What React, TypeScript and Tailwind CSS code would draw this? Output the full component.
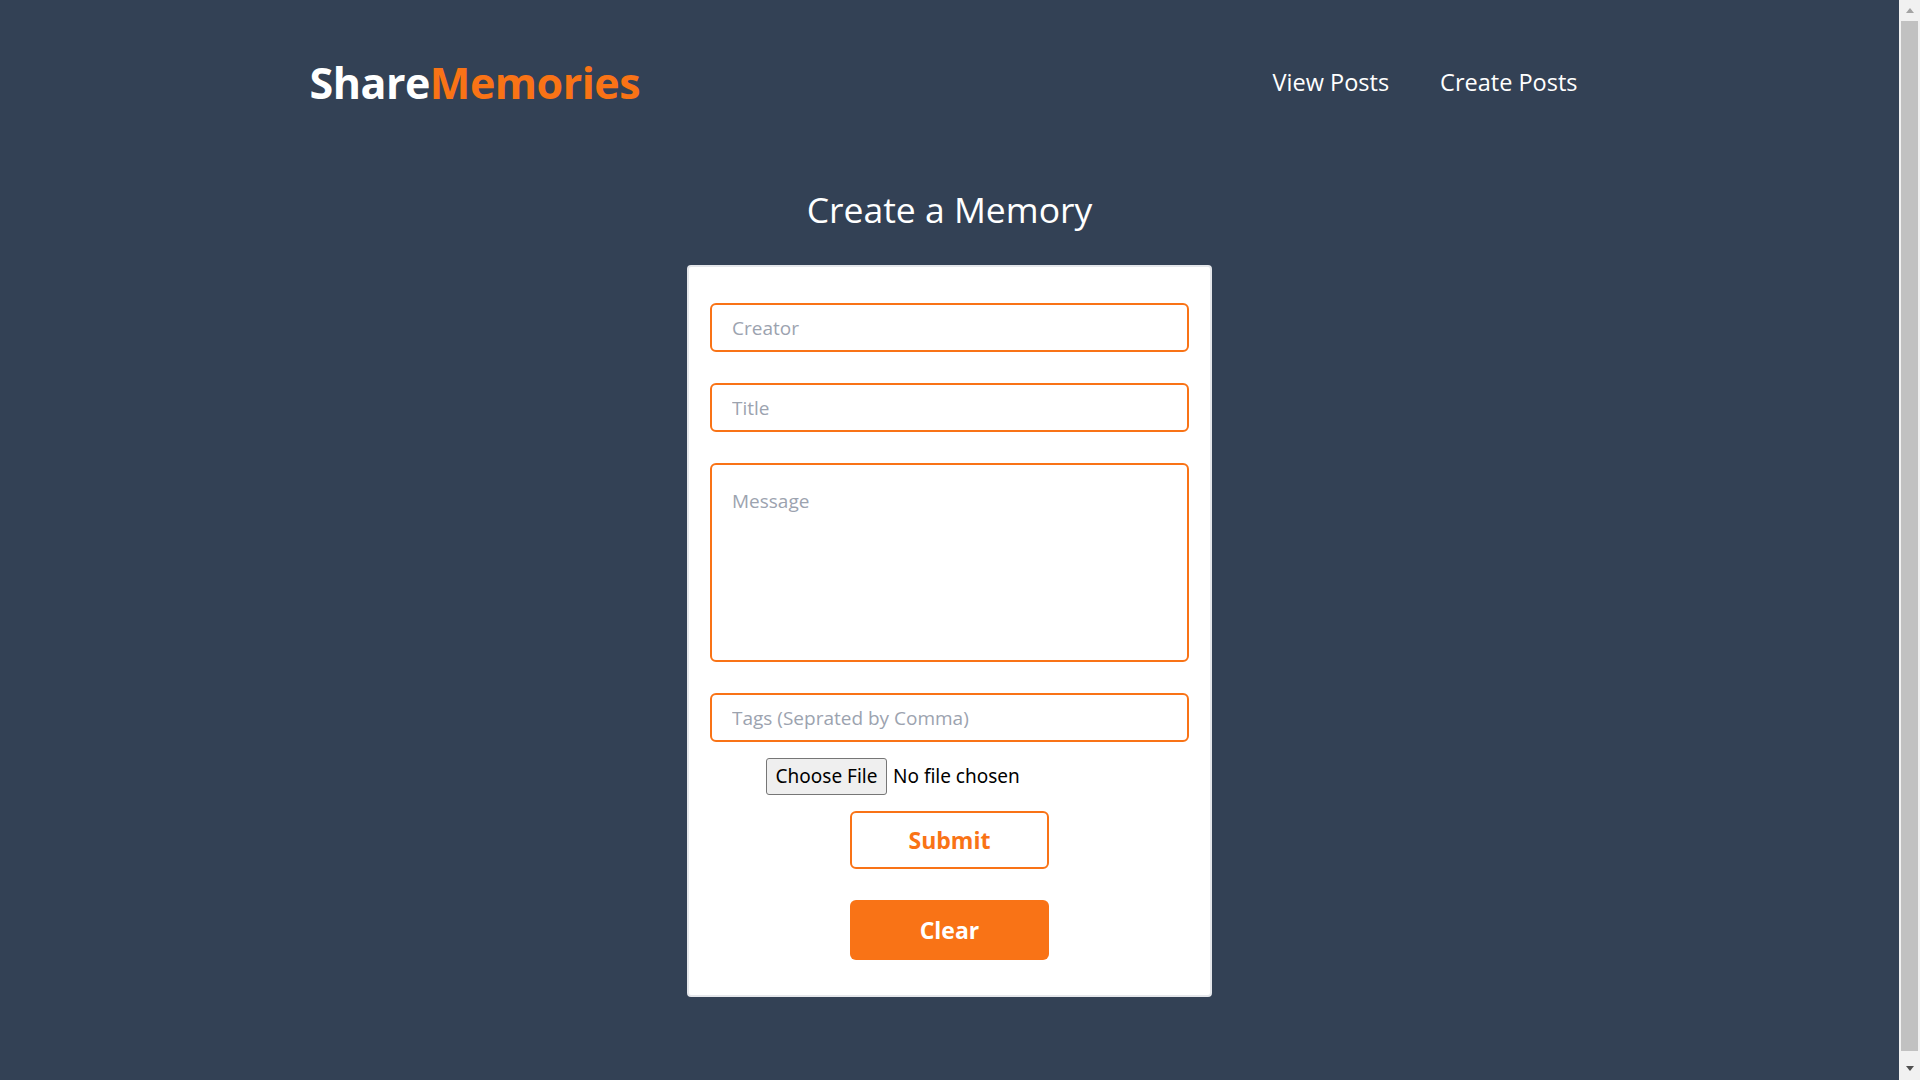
import { useState } from 'react';

const fieldClass =
  'w-full h-[49px] rounded-md border-2 border-[#f97316] bg-white px-5 text-[19px] text-gray-800 placeholder:text-[#9ca3af] outline-none';

function Scrollbar() {
  return (
    <aside className="flex h-full w-[21px] shrink-0 flex-col bg-[#f1f1f1]">
      <div className="flex h-[21px] items-center justify-center">
        <div className="h-0 w-0 border-x-[4px] border-b-[5px] border-x-transparent border-b-[#a3a3a3]" />
      </div>
      <div className="mx-[2px] h-[1030px] bg-[#c1c1c1]" />
      <div className="flex flex-1 items-center justify-center pt-[6px]">
        <div className="h-0 w-0 border-x-[4px] border-t-[5px] border-x-transparent border-t-[#505050]" />
      </div>
    </aside>
  );
}

export default function App() {
  const [creator, setCreator] = useState('');
  const [title, setTitle] = useState('');
  const [message, setMessage] = useState('');
  const [tags, setTags] = useState('');

  const clear = () => {
    setCreator('');
    setTitle('');
    setMessage('');
    setTags('');
  };

  return (
    <div className="flex h-[1080px] w-full overflow-hidden bg-[#334155] font-['Open_Sans',sans-serif]">
      <div className="flex-1">
        <header className="mx-auto flex h-[166px] max-w-7xl items-center justify-between pb-[2px]">
          <a href="#" className="text-[43px] font-bold leading-none tracking-[-0.5px]">
            <span className="text-white">Share</span>
            <span className="text-[#f97316]">Memories</span>
          </a>
          <nav className="flex items-center gap-[51px] pr-[12px] pt-[2px] text-[23.5px] text-white">
            <a href="#">View Posts</a>
            <a href="#">Create Posts</a>
          </nav>
        </header>

        <main className="flex flex-col items-center">
          <h1 className="mt-[18px] text-[35.5px] leading-[50px] text-white">Create a Memory</h1>

          <form
            onSubmit={(e) => e.preventDefault()}
            className="mt-[31px] flex w-[525px] flex-col rounded border-2 border-gray-200 bg-white px-[21px] pt-[36px] pb-[35px]"
          >
            <input
              value={creator}
              onChange={(e) => setCreator(e.target.value)}
              placeholder="Creator"
              className={fieldClass}
            />
            <input
              value={title}
              onChange={(e) => setTitle(e.target.value)}
              placeholder="Title"
              className={`${fieldClass} mt-[31px]`}
            />
            <textarea
              value={message}
              onChange={(e) => setMessage(e.target.value)}
              placeholder="Message"
              className="mt-[31px] h-[199px] w-full resize-none rounded-md border-2 border-[#f97316] bg-white px-5 pt-[21px] text-[19px] leading-[30px] text-gray-800 placeholder:text-[#9ca3af] outline-none"
            />
            <input
              value={tags}
              onChange={(e) => setTags(e.target.value)}
              placeholder="Tags (Seprated by Comma)"
              className={`${fieldClass} mt-[31px]`}
            />

            <div className="mt-4 flex items-center pl-[56px] font-['Noto_Sans',sans-serif] text-[19px] text-black">
              <button
                type="button"
                className="h-[37px] w-[121px] rounded-[3px] border border-[#767676] bg-[#efefef]"
              >
                Choose File
              </button>
              <span className="ml-[6px]">No file chosen</span>
            </div>

            <button
              type="submit"
              className="mx-auto mt-4 h-[58px] w-[199px] rounded-md border-2 border-[#f97316] bg-white text-[23px] font-bold text-[#f97316]"
            >
              Submit
            </button>
            <button
              type="button"
              onClick={clear}
              className="mx-auto mt-[31px] h-[60px] w-[199px] rounded-md bg-[#f97316] text-[23px] font-bold text-white"
            >
              Clear
            </button>
          </form>
        </main>
      </div>
      <Scrollbar />
    </div>
  );
}
